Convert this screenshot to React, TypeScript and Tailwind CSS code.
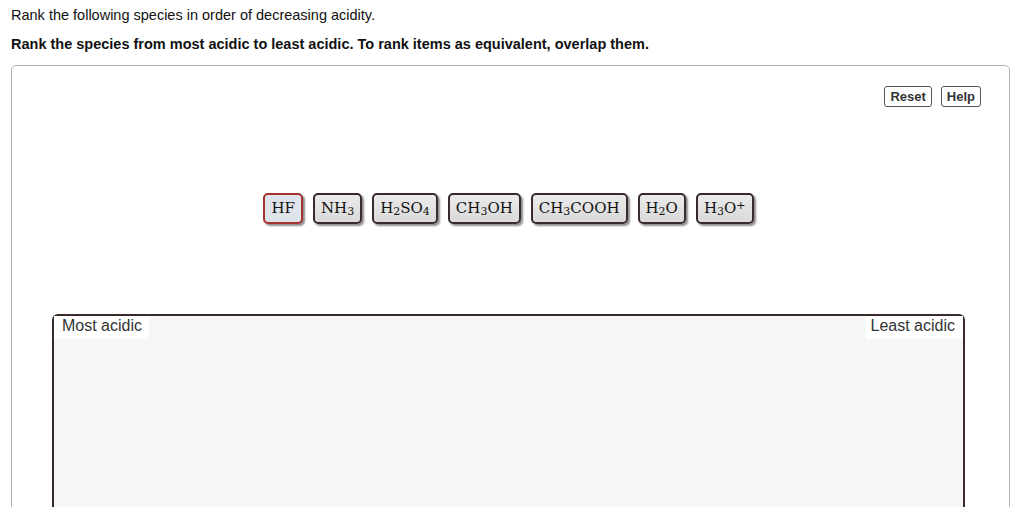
import type { ReactNode } from 'react';

type Species = { id: string; label: ReactNode; selected?: boolean };

const SPECIES: Species[] = [
    { id: 'hf', label: <>HF</>, selected: true },
    { id: 'nh3', label: <>NH<sub>3</sub></> },
    { id: 'h2so4', label: <>H<sub>2</sub>SO<sub>4</sub></> },
    { id: 'ch3oh', label: <>CH<sub>3</sub>OH</> },
    { id: 'ch3cooh', label: <>CH<sub>3</sub>COOH</> },
    { id: 'h2o', label: <>H<sub>2</sub>O</> },
    { id: 'h3o', label: <>H<sub>3</sub>O<sup>+</sup></> },
];

function Chip({ s }: { s: Species }) {
    return (
        <div
            className={`h-[31px] px-[6px] flex items-center rounded-[5px] border-2 shadow-[2px_2px_2px_rgba(0,0,0,0.45)] text-[15px] text-[#111] leading-none [&_sub]:text-[11px] [&_sub]:relative [&_sub]:top-[2px] [&_sup]:text-[11px] [&_sup]:relative [&_sup]:-top-[4px] ${
                s.selected
                    ? 'border-[#a83232] bg-[#dfe4ea]'
                    : 'border-[#3a2b2b] bg-gradient-to-b from-[#ebebeb] to-[#d9d9d9]'
            }`}
            style={{ fontFamily: '"DejaVu Serif", "Liberation Serif", serif' }}
        >
            <span>{s.label}</span>
        </div>
    );
}

export default function App() {
    return (
        <div className="w-[1024px] h-[507px] overflow-hidden bg-white px-[11px] pt-[5px] text-[#111]" style={{ fontFamily: '"Liberation Sans", Arial, sans-serif' }}>
            <p className="text-[14.5px] leading-[20px]">Rank the following species in order of decreasing acidity.</p>
            <p className="mt-[9px] text-[14.5px] leading-[20px] font-bold">Rank the species from most acidic to least acidic. To rank items as equivalent, overlap them.</p>

            <div className="mt-[11px] w-[999px] h-[460px] border border-[#b5b5b5] rounded-[5px]">
                {/* Toolbar */}
                <div className="flex justify-end gap-[9px] pt-[20px] pr-[28px]">
                    <button className="h-[21px] px-[5px] border border-[#555] rounded-[3px] text-[13px] font-bold text-[#333] leading-none bg-white">Reset</button>
                    <button className="h-[21px] px-[5px] border border-[#555] rounded-[3px] text-[13px] font-bold text-[#333] leading-none bg-white">Help</button>
                </div>

                {/* Items */}
                <div className="mt-[86px] flex justify-center gap-[10px] pr-[4px]">
                    {SPECIES.map((s) => (
                        <Chip key={s.id} s={s} />
                    ))}
                </div>

                {/* Ranking area */}
                <div className="mt-[90px] ml-[40px] w-[913px] h-[240px] border-2 border-b-0 border-[#3a2b2b] rounded-t-[6px] bg-[#f6f6f6] flex justify-between items-start">
                    <span className="bg-white pl-[8px] pr-[7px] h-[23px] whitespace-nowrap text-[16px] text-[#333] leading-[20px]">Most acidic</span>
                    <span className="bg-white pl-[5px] pr-[8px] h-[23px] whitespace-nowrap text-[16px] text-[#333] leading-[20px]">Least acidic</span>
                </div>
            </div>
        </div>
    );
}
